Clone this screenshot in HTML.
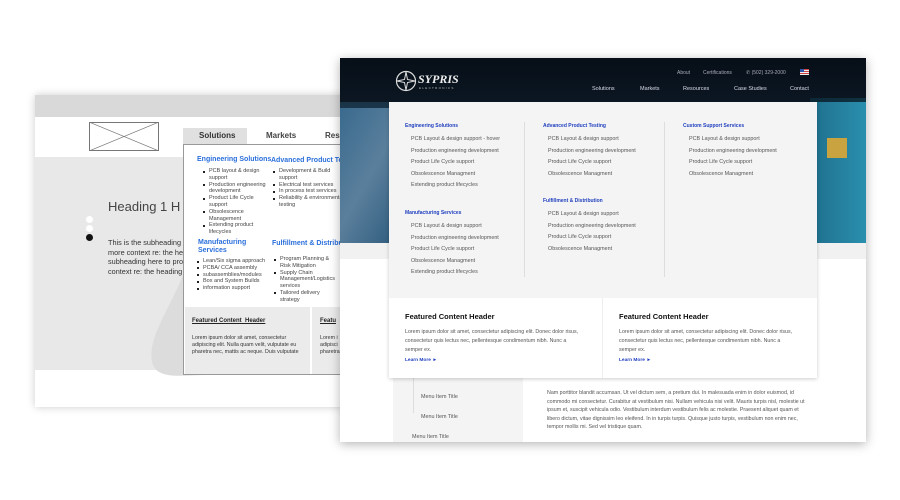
<!DOCTYPE html>
<html><head><meta charset="utf-8"><style>
*{margin:0;padding:0;box-sizing:border-box}
body{width:900px;height:500px;background:#fff;position:relative;overflow:hidden;font-family:"Liberation Sans",sans-serif}
.a{position:absolute}
.wf{font-family:"Liberation Sans",sans-serif;color:#333}
.wf ul{list-style:none}
.wf li{position:relative;padding-left:0;font-size:5.5px;line-height:6.8px;color:#444}
.wf li:before{content:"";position:absolute;left:-6px;top:2.5px;width:2px;height:2px;background:#222}
.blue{color:#2a6fdb;font-weight:bold;font-size:7px}
.m{font-size:5.4px;color:#555;line-height:11.6px}
.mh{font-size:5px;color:#1f3fbf;font-weight:bold}
</style></head><body>
<div class="a" style="left:35px;top:95px;width:310px;height:312px;background:#fff;box-shadow:0 0 8px rgba(0,0,0,.2)"></div>
<div class="a" style="left:35px;top:95px;width:310px;height:22px;background:#d9d9d9"></div>
<div class="a" style="left:35px;top:157px;width:310px;height:213px;background:#e8e8e8"></div>
<svg class="a" style="left:145px;top:270px" width="60" height="110"><path d="M40 0 C25 40 0 70 8 95 C14 110 40 105 60 105 L60 0Z" fill="#dcdcdc"/></svg>
<svg class="a" style="left:89px;top:122px" width="70" height="29"><rect x=".5" y=".5" width="69" height="28" fill="#fff" stroke="#777"/><path d="M0 0L70 29M70 0L0 29" stroke="#777" stroke-width=".7"/></svg>
<div class="a wf" style="left:108px;top:199px;font-size:13px;color:#444">Heading 1 H</div>
<div class="a wf" style="left:108px;top:238px;font-size:7.3px;line-height:9.7px;color:#333">This is the subheading<br>more context re: the he<br>subheading here to pro<br>context re: the heading</div>
<div class="a" style="left:86px;top:216px;width:7px;height:7px;border-radius:50%;background:#fff"></div>
<div class="a" style="left:86px;top:225px;width:7px;height:7px;border-radius:50%;background:#fff"></div>
<div class="a" style="left:86px;top:234px;width:7px;height:7px;border-radius:50%;background:#111"></div>
<div class="a" style="left:183px;top:128px;width:64px;height:16px;background:#e0e0e0"></div>
<div class="a wf" style="left:199px;top:131px;font-size:8px;font-weight:bold">Solutions</div>
<div class="a wf" style="left:266px;top:131px;font-size:8px;font-weight:bold;color:#444">Markets</div>
<div class="a wf" style="left:325px;top:131px;font-size:8px;font-weight:bold;color:#444">Res</div>
<div class="a wf" style="left:183px;top:144px;width:162px;height:231px;background:#fff;border:1px solid #999;overflow:hidden">
 <div class="a blue" style="left:13px;top:11px">Engineering Solutions</div>
 <ul class="a" style="left:25px;top:23px;width:62px"><li>PCB layout &amp; design support</li><li>Production engineering development</li><li>Product Life Cycle support</li><li>Obsolescence Management</li><li>Extending product lifecycles</li></ul>
 <div class="a blue" style="left:87px;top:12px;white-space:nowrap">Advanced Product Testi</div>
 <ul class="a" style="left:95px;top:23px;width:70px"><li>Development &amp; Build support</li><li>Electrical test services</li><li>In process test services</li><li>Reliability &amp; environmental testing</li></ul>
 <div class="a blue" style="left:14px;top:94px;line-height:8px">Manufacturing<br>Services</div>
 <ul class="a" style="left:19px;top:113px;width:68px"><li>Lean/Six sigma approach</li><li>PCBA/ CCA assembly</li><li>subassemblies/modules</li><li>Box and System Builds</li><li>information support</li></ul>
 <div class="a blue" style="left:88px;top:95px;white-space:nowrap">Fulfillment &amp; Distributio</div>
 <ul class="a" style="left:96px;top:111px;width:60px"><li>Program Planning &amp; Risk Mitigation</li><li>Supply Chain Management/Logistics services</li><li>Tailored delivery strategy</li></ul>
 <div class="a" style="left:1px;top:162px;width:125px;height:68px;background:#ebebeb"></div>
 <div class="a" style="left:128px;top:162px;width:40px;height:68px;background:#ebebeb"></div>
 <div class="a" style="left:8px;top:173px;font-size:6px;font-weight:bold;text-decoration:underline;color:#222">Featured Content &nbsp;Header</div>
 <div class="a" style="left:8px;top:190px;font-size:5.3px;line-height:6.8px;color:#333;width:115px">Lorem ipsum dolor sit amet, consectetur adipiscing elit. Nulla quam velit, vulputate eu pharetra nec, mattis ac neque. Duis vulputate</div>
 <div class="a" style="left:136px;top:173px;font-size:6px;font-weight:bold;text-decoration:underline;color:#222">Featu</div>
 <div class="a" style="left:136px;top:190px;font-size:5.3px;line-height:6.8px;color:#333">Lorem i<br>adipisci<br>pharetra</div>
</div>
<div class="a" style="left:340px;top:58px;width:526px;height:384px;background:#fff;box-shadow:0 2px 10px rgba(0,0,0,.3);overflow:hidden">
 <div class="a" style="left:0;top:0;width:526px;height:185px;background:linear-gradient(180deg,#0b1620 0%,#1a3448 25%,#2a5a7c 60%,#2f6686 100%)"></div>
 <div class="a" style="left:0;top:50px;width:60px;height:135px;background:linear-gradient(120deg,#3a6a8e,#5a7f9c 50%,#2d5a7c)"></div>
 <div class="a" style="left:470px;top:40px;width:56px;height:145px;background:linear-gradient(90deg,#1e6f8c,#2a8fae)"></div>
 <div class="a" style="left:487px;top:80px;width:20px;height:20px;background:#c9a340"></div>
 <div class="a" style="left:0;top:0;width:526px;height:44px;background:rgba(5,12,20,.7)"></div>
 <div class="a" style="left:0;top:185px;width:526px;height:16px;background:#f1f1f1"></div>
 <svg class="a" style="left:55px;top:12px" width="22" height="22" viewBox="0 0 22 22"><circle cx="11" cy="11" r="9.5" fill="none" stroke="#ddd" stroke-width="1.2"/><path d="M11 2L12.5 9.5L20 11L12.5 12.5L11 20L9.5 12.5L2 11L9.5 9.5Z" fill="none" stroke="#ddd"/></svg>
 <div class="a" style="left:78px;top:14px;color:#eee;font-family:'Liberation Serif',serif;font-style:italic;font-weight:bold;font-size:12px">SYPRIS</div>
 <div class="a" style="left:79px;top:28px;color:#bbb;font-size:3px;letter-spacing:1.3px">ELECTRONICS</div>
 <div class="a" style="left:337px;top:12px;color:#aab;font-size:5px">About</div>
 <div class="a" style="left:363px;top:12px;color:#aab;font-size:5px">Certifications</div>
 <div class="a" style="left:406px;top:12px;color:#aab;font-size:5px">✆ (502) 329-2000</div>
 <div class="a" style="left:460px;top:11px;width:9px;height:6px;background:repeating-linear-gradient(180deg,#c44 0 1px,#eee 1px 2px)"><div style="width:4px;height:3px;background:#35a"></div></div>
 <div class="a" style="left:252px;top:28px;color:#dde;font-size:5.5px">Solutions</div>
 <div class="a" style="left:300px;top:28px;color:#dde;font-size:5.5px">Markets</div>
 <div class="a" style="left:343px;top:28px;color:#dde;font-size:5.5px">Resources</div>
 <div class="a" style="left:394px;top:28px;color:#dde;font-size:5.5px">Case Studies</div>
 <div class="a" style="left:450px;top:28px;color:#dde;font-size:5.5px">Contact</div>
 <div class="a" style="left:53px;top:300px;width:130px;height:84px;background:#f4f4f4"></div>
 <div class="a" style="left:73px;top:315px;width:1px;height:40px;background:#ddd"></div>
 <div class="a m" style="left:72px;top:313px">Menu Item Title</div>
 <div class="a m" style="left:81px;top:334px">Menu Item Title</div>
 <div class="a m" style="left:81px;top:354px">Menu Item Title</div>
 <div class="a m" style="left:72px;top:374px">Menu Item Title</div>
 <div class="a" style="left:207px;top:331px;width:265px;font-size:5.3px;line-height:8.6px;color:#555">Nam porttitor blandit accumsan. Ut vel dictum sem, a pretium dui. In malesuada enim in dolor euismod, id commodo mi consectetur. Curabitur at vestibulum nisi. Nullam vehicula nisi velit. Mauris turpis nisl, molestie ut ipsum et, suscipit vehicula odio. Vestibulum interdum vestibulum felis ac molestie. Praesent aliquet quam et libero dictum, vitae dignissim leo eleifend. In in turpis turpis. Quisque justo turpis, vestibulum non enim nec, tempor mollis mi. Sed vel tristique quam.</div>
 <div class="a" style="left:49px;top:44px;width:428px;height:276px;background:#f4f4f4;box-shadow:0 1px 4px rgba(0,0,0,.2)">
  <div class="a" style="left:135px;top:20px;width:1px;height:155px;background:#ddd"></div>
  <div class="a" style="left:275px;top:20px;width:1px;height:155px;background:#ddd"></div>
  <div class="a mh" style="left:16px;top:21px">Engineering Solutions</div>
  <div class="a m" style="left:22px;top:32px">PCB Layout &amp; design support - hover<br>Production engineering development<br>Product Life Cycle support<br>Obsolescence Managment<br>Extending product lifecycles</div>
  <div class="a mh" style="left:16px;top:108px">Manufacturing Services</div>
  <div class="a m" style="left:22px;top:119px">PCB Layout &amp; design support<br>Production engineering development<br>Product Life Cycle support<br>Obsolescence Managment<br>Extending product lifecycles</div>
  <div class="a mh" style="left:154px;top:21px">Advanced Product Testing</div>
  <div class="a m" style="left:159px;top:32px">PCB Layout &amp; design support<br>Production engineering development<br>Product Life Cycle support<br>Obsolescence Managment</div>
  <div class="a mh" style="left:154px;top:96px">Fulfillment &amp; Distribution</div>
  <div class="a m" style="left:159px;top:107px">PCB Layout &amp; design support<br>Production engineering development<br>Product Life Cycle support<br>Obsolescence Managment</div>
  <div class="a mh" style="left:294px;top:21px">Custom Support Services</div>
  <div class="a m" style="left:300px;top:32px">PCB Layout &amp; design support<br>Production engineering development<br>Product Life Cycle support<br>Obsolescence Managment</div>
  <div class="a" style="left:0;top:196px;width:428px;height:80px;background:#fff"></div>
  <div class="a" style="left:213px;top:196px;width:1px;height:80px;background:#eee"></div>
  <div class="a" style="left:16px;top:210px;font-size:7.5px;font-weight:bold;color:#111">Featured Content Header</div>
  <div class="a" style="left:16px;top:226px;width:180px;font-size:5.3px;line-height:8.8px;color:#555">Lorem ipsum dolor sit amet, consectetur adipiscing elit. Donec dolor risus, consectetur quis lectus nec, pellentesque condimentum nibh. Nunc a semper ex.</div>
  <div class="a" style="left:16px;top:256px;font-size:4.8px;font-weight:bold;color:#1f3fbf">Learn More &nbsp;▸</div>
  <div class="a" style="left:230px;top:210px;font-size:7.5px;font-weight:bold;color:#111">Featured Content Header</div>
  <div class="a" style="left:230px;top:226px;width:180px;font-size:5.3px;line-height:8.8px;color:#555">Lorem ipsum dolor sit amet, consectetur adipiscing elit. Donec dolor risus, consectetur quis lectus nec, pellentesque condimentum nibh. Nunc a semper ex.</div>
  <div class="a" style="left:230px;top:256px;font-size:4.8px;font-weight:bold;color:#1f3fbf">Learn More &nbsp;▸</div>
 </div>
</div>
</body></html>
